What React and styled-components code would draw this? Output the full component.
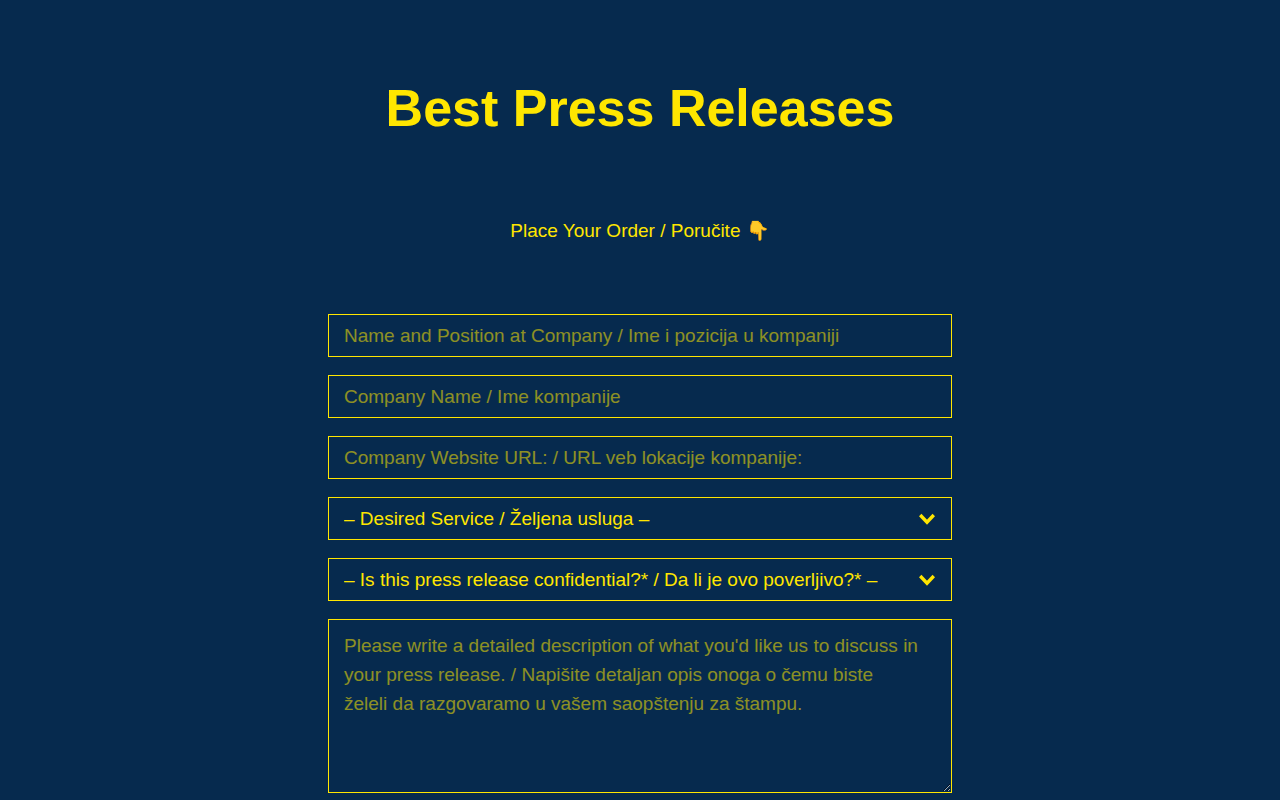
import React, { useState } from 'react'
import styled, { createGlobalStyle, css } from 'styled-components'

const services = ['Press Release Writing', 'Press Release Distribution', 'Writing and Distribution']

export default function App() {
  const [order, setOrder] = useState({ name: '', company: '', url: '', service: '', confidential: '', details: '' })

  const handleChange = e => {
    const { name, value } = e.target
    setOrder(prev => ({ ...prev, [name]: value }))
  }

  return (
    <>
      <GlobalStyle />
      <Page>
        <Title>Best Press Releases</Title>
        <Intro>Place Your Order / Poručite 👇</Intro>
        <Form onSubmit={e => e.preventDefault()}>
          <Input
            name="name"
            aria-label="Name and Position"
            placeholder="Name and Position at Company / Ime i pozicija u kompaniji"
            value={order.name}
            onChange={handleChange}
          />
          <Input
            name="company"
            aria-label="Company Name"
            placeholder="Company Name / Ime kompanije"
            value={order.company}
            onChange={handleChange}
          />
          <Input
            name="url"
            aria-label="Company Website URL"
            placeholder="Company Website URL: / URL veb lokacije kompanije:"
            value={order.url}
            onChange={handleChange}
          />
          <SelectWrapper>
            <Select name="service" aria-label="Desired Service" value={order.service} onChange={handleChange}>
              <option value="">– Desired Service / Željena usluga –</option>
              {services.map(s => <option key={s} value={s}>{s}</option>)}
            </Select>
            <Chevron />
          </SelectWrapper>
          <SelectWrapper>
            <Select name="confidential" aria-label="Confidential" value={order.confidential} onChange={handleChange}>
              <option value="">– Is this press release confidential?* / Da li je ovo poverljivo?* –</option>
              <option value="yes">Yes / Da</option>
              <option value="no">No / Ne</option>
            </Select>
            <Chevron />
          </SelectWrapper>
          <TextArea
            name="details"
            aria-label="Description"
            placeholder="Please write a detailed description of what you'd like us to discuss in your press release. / Napišite detaljan opis onoga o čemu biste želeli da razgovaramo u vašem saopštenju za štampu."
            value={order.details}
            onChange={handleChange}
          />
        </Form>
      </Page>
    </>
  )
}

const Chevron = () => (
  <ChevronIcon viewBox="0 0 16 12" aria-hidden="true">
    <path d="M1.200 2 8 9.200 14.800 2" />
  </ChevronIcon>
)

const GlobalStyle = createGlobalStyle`
  * {
    box-sizing: border-box;
  }
  body {
    margin: 0;
    background: #062a4e;
    color: #ffe600;
    font-family: "Liberation Sans", Arial, sans-serif;
  }
`

const Page = styled.main`
  max-width: 656px;
  margin: 0 auto;
  padding: 72px 16px 8px;
`

const Title = styled.h1`
  margin: 0;
  font-size: 52px;
  line-height: 72px;
  font-weight: 700;
  text-align: center;
`

const Intro = styled.p`
  margin: 72px 0 68px;
  font-size: 19px;
  line-height: 30px;
  text-align: center;
`

const Form = styled.form`
  display: flex;
  flex-direction: column;
  gap: 18px;
`

const field = css`
  display: block;
  width: 100%;
  margin: 0;
  padding: 0 15px;
  border: 1px solid #ffe600;
  border-radius: 0;
  background: transparent;
  color: #ffe600;
  font-family: inherit;
  font-size: 19px;
  line-height: 29px;
  &::placeholder {
    color: #ffe600;
    opacity: 0.54;
  }
  &:focus {
    outline: 1px solid #ffe600;
  }
`

const Input = styled.input`
  ${field}
  height: 43px;
`

const SelectWrapper = styled.div`
  position: relative;
`

const Select = styled.select`
  ${field}
  height: 43px;
  padding-right: 48px;
  appearance: none;
  option {
    background: #062a4e;
  }
`

const ChevronIcon = styled.svg`
  position: absolute;
  top: 16px;
  right: 17px;
  width: 16px;
  height: 12px;
  fill: none;
  stroke: #ffe600;
  stroke-width: 3.4;
  pointer-events: none;
`

const TextArea = styled.textarea`
  ${field}
  height: 174px;
  padding-top: 11px;
  padding-right: 31px;
  padding-bottom: 11px;
  resize: vertical;
`
